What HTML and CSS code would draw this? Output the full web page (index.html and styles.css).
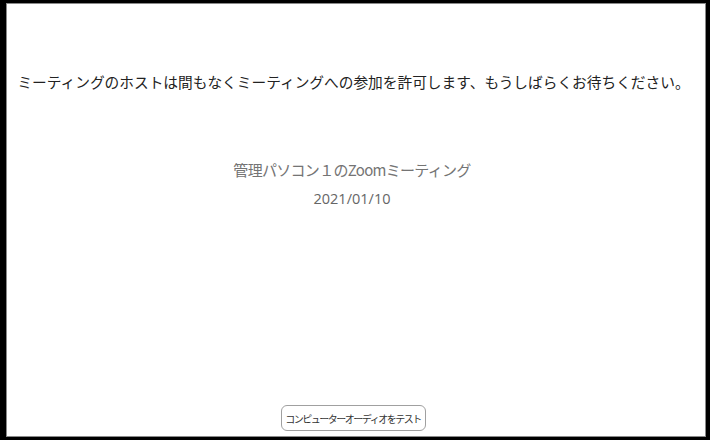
FILE: index.html
```html
<!DOCTYPE html>
<html lang="ja">
<head>
<meta charset="utf-8">
<link rel="stylesheet" href="styles.css">
</head>
<body>
<div class="frame">
  <p class="message">ミーティングのホストは間もなくミーティングへの参加を許可します、もうしばらくお待ちください。</p>
  <div class="info">
    <p class="title">管理パソコン１のZoomミーティング</p>
    <p class="date">2021/01/10</p>
  </div>
  <div class="footer">
    <button class="test-btn">コンピューターオーディオをテスト</button>
  </div>
</div>
</body>
</html>
```
FILE: styles.css
```css
html, body {
  margin: 0;
  padding: 0;
  background: #000;
  width: 710px;
  height: 440px;
  overflow: hidden;
}
.frame {
  box-sizing: border-box;
  margin: 3px 4px 3px 6px;
  padding-right: 5px;
  height: 434px;
  background: #fff;
  border: 1px solid #8a8a8a;
  display: flex;
  flex-direction: column;
  align-items: center;
  font-family: "Noto Sans CJK JP", "Noto Sans", sans-serif;
}
.message {
  margin: 68px 0 0;
  font-size: 14.7px;
  line-height: 20px;
  color: #222;
  white-space: nowrap;
}
.info {
  margin-top: 67px;
  padding-right: 3px;
  display: flex;
  flex-direction: column;
  align-items: center;
}
.title {
  margin: 0;
  font-size: 15px;
  line-height: 22px;
  color: #747474;
  letter-spacing: -0.7px;
}
.date {
  margin: 8px 0 0;
  font-family: "Open Sans", "Noto Sans", sans-serif;
  font-size: 14.5px;
  line-height: 20px;
  color: #666;
}
.footer {
  margin-top: auto;
  padding-bottom: 5px;
  padding-right: 1px;
}
.test-btn {
  box-sizing: border-box;
  width: 145px;
  height: 26px;
  border: 1px solid #a0a0a0;
  border-radius: 6px;
  background: #fff;
  color: #333;
  font-family: "Noto Sans CJK JP", sans-serif;
  font-size: 10px;
  letter-spacing: -1.5px;
  padding: 0;
}
```
